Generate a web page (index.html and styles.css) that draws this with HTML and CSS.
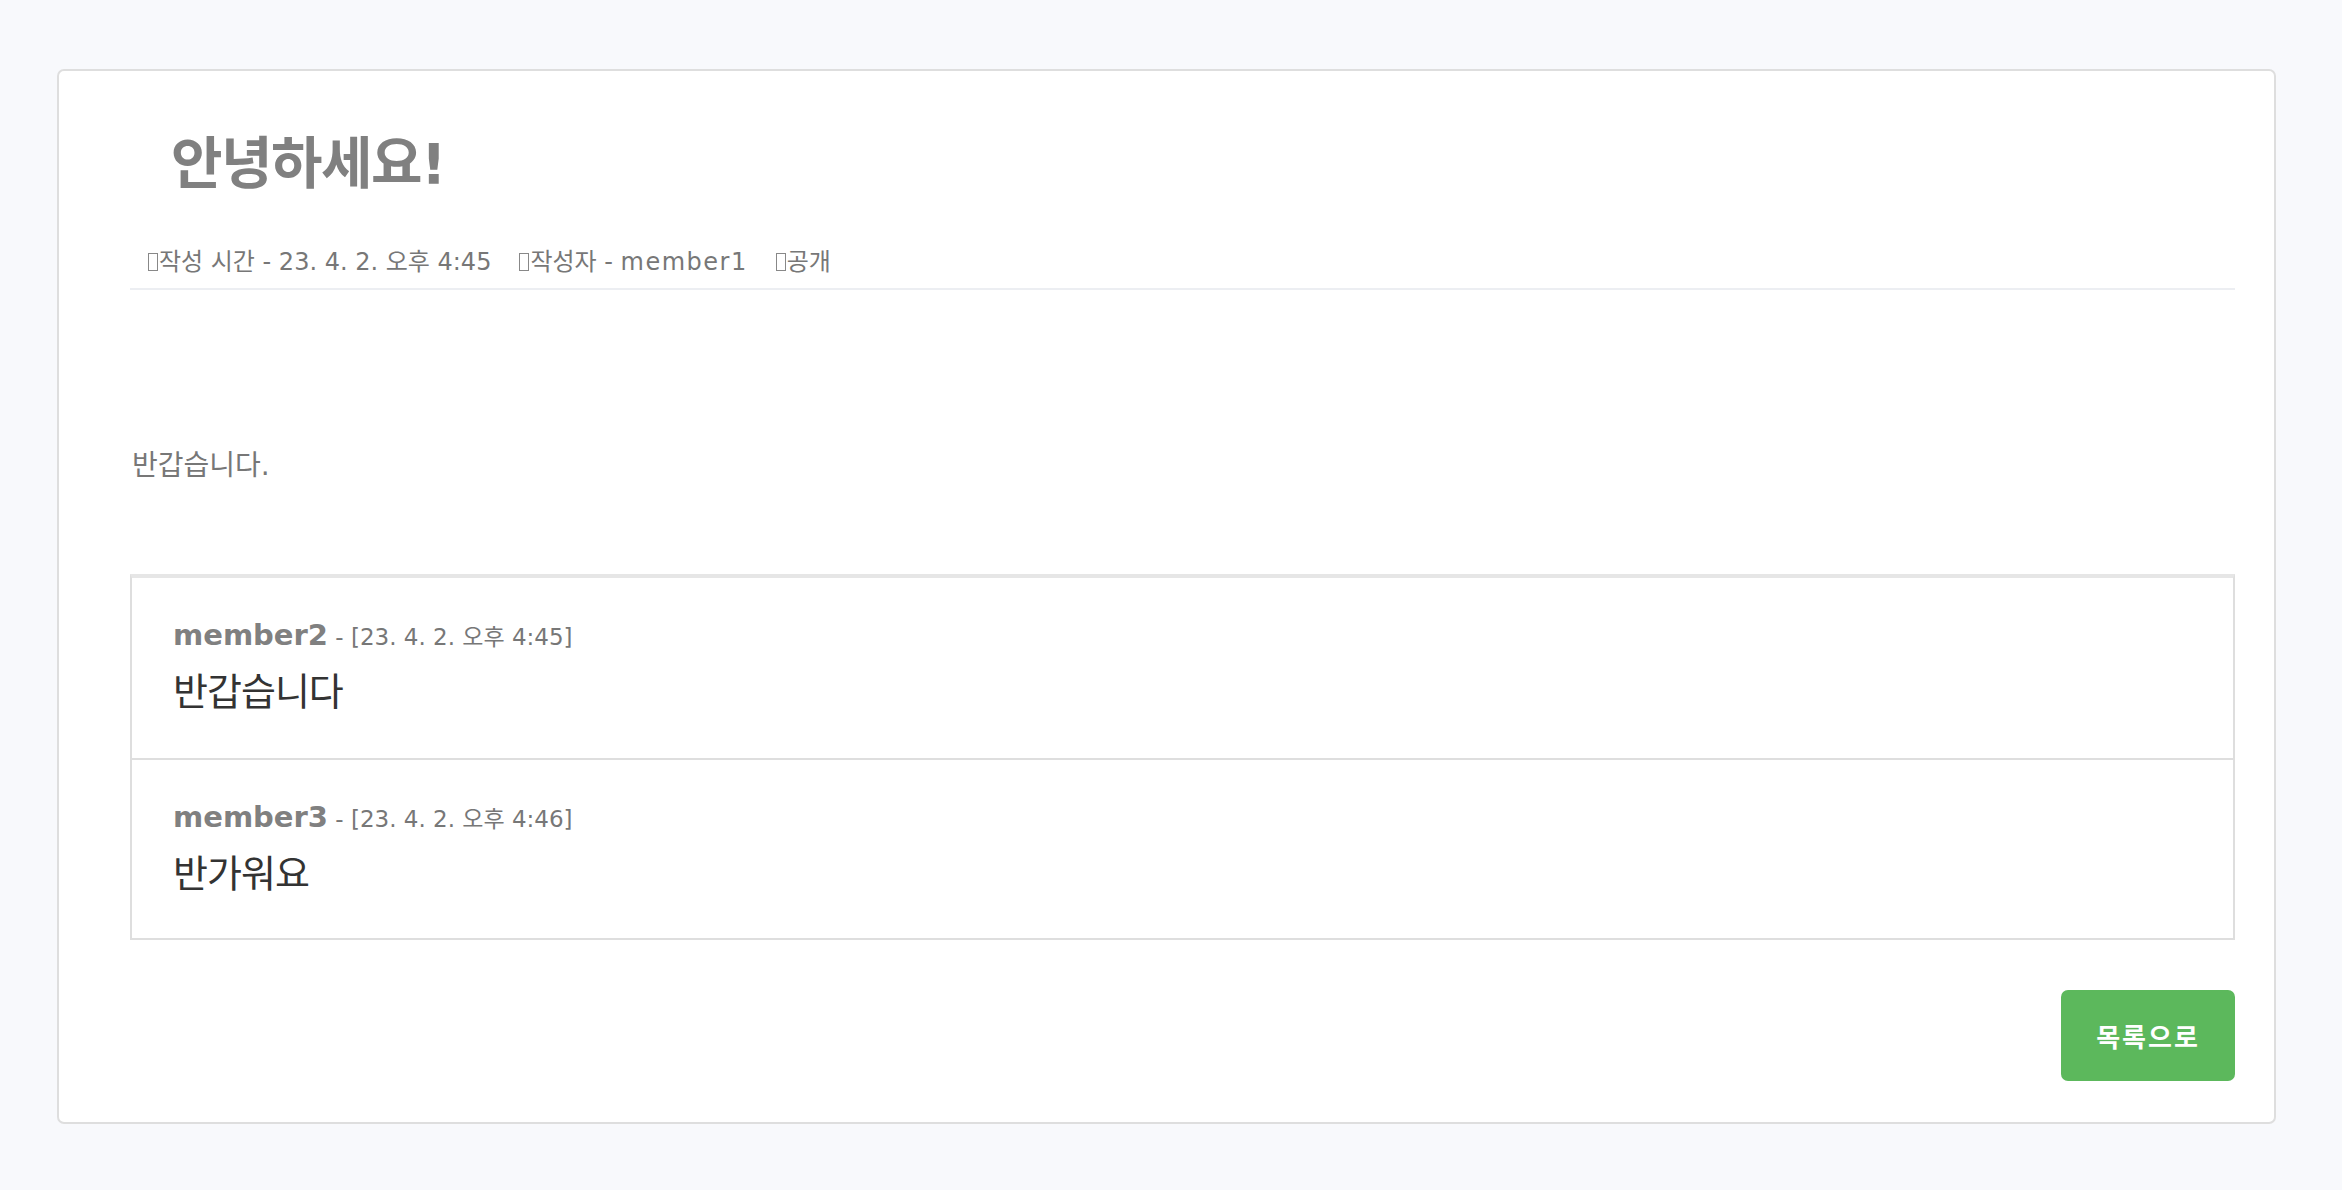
FILE: index.html
```html
<!DOCTYPE html>
<html lang="ko">
<head>
<meta charset="utf-8">
<title>안녕하세요!</title>
<link rel="stylesheet" href="styles.css">
</head>
<body>
<div class="card">
  <div class="post-head">
    <h1 class="title">안녕하세요!</h1>
    <div class="meta">
      <span class="meta-item"><i class="ico"></i>작성 시간 - 23. 4. 2. 오후 4:45</span>
      <span class="meta-item"><i class="ico"></i>작성자 - <span class="meta-name">member1</span></span>
      <span class="meta-item"><i class="ico"></i>공개</span>
    </div>
  </div>
  <div class="post-body">반갑습니다.</div>
  <ul class="comments">
    <li class="comment">
      <div class="c-head"><b class="c-author">member2</b> <span class="c-date">- [23. 4. 2. 오후 4:45]</span></div>
      <div class="c-text">반갑습니다</div>
    </li>
    <li class="comment">
      <div class="c-head"><b class="c-author">member3</b> <span class="c-date">- [23. 4. 2. 오후 4:46]</span></div>
      <div class="c-text">반가워요</div>
    </li>
  </ul>
  <div class="actions"><button class="btn" type="button">목록으로</button></div>
</div>
</body>
</html>
```
FILE: styles.css
```css
html, body {
  margin: 0;
  padding: 0;
}
body {
  background: #f8f9fc;
  font-family: "DejaVu Sans", "Noto Sans CJK KR", sans-serif;
  color: #777;
}
.card {
  margin: 69px 66px 0 57px;
  background: #fff;
  border: 2px solid #dedede;
  border-radius: 7px;
  padding: 43px 39px 41px 71px;
}
.post-head {
  border-bottom: 2px solid #eceef2;
}
.title {
  margin: 0;
  padding-left: 41px;
  font-size: 56px;
  line-height: 100px;
  font-weight: 700;
  color: #808080;
  letter-spacing: -1.5px;
}
.meta {
  display: flex;
  gap: 28px;
  padding: 32px 0 10px 18px;
  font-size: 24px;
  line-height: 32px;
  color: #777;
}
.meta-item {
  display: inline-flex;
  align-items: center;
  white-space: pre;
}
.meta-name {
  letter-spacing: 1.5px;
}
.ico {
  display: inline-block;
  width: 8px;
  height: 16px;
  border: 1px solid #888;
  margin-right: 1px;
}
.post-body {
  padding: 156px 0 0 2px;
  height: 128px;
  font-size: 28px;
  line-height: 40px;
  color: #777;
}
.comments {
  list-style: none;
  margin: 0;
  padding: 0;
  border: 2px solid #dedede;
  border-top: 4px solid #e6e6e6;
}
.comment {
  height: 180px;
  box-sizing: border-box;
  padding: 37px 40px 0 41px;
}
.comment + .comment {
  border-top: 2px solid #dedede;
}
.c-head {
  font-size: 23px;
  line-height: 40px;
  color: #777;
}
.c-author {
  font-size: 29px;
  color: #808080;
}
.c-text {
  margin-top: 7px;
  font-size: 38px;
  line-height: 56px;
  color: #333;
  letter-spacing: -1px;
}
.actions {
  display: flex;
  justify-content: flex-end;
  padding-top: 50px;
}
.btn {
  width: 174px;
  height: 91px;
  border: 0;
  border-radius: 7px;
  background: #5cb85c;
  color: #fff;
  font-family: "Noto Sans CJK KR", sans-serif;
  font-weight: 700;
  font-size: 26px;
  letter-spacing: 2px;
}
```
